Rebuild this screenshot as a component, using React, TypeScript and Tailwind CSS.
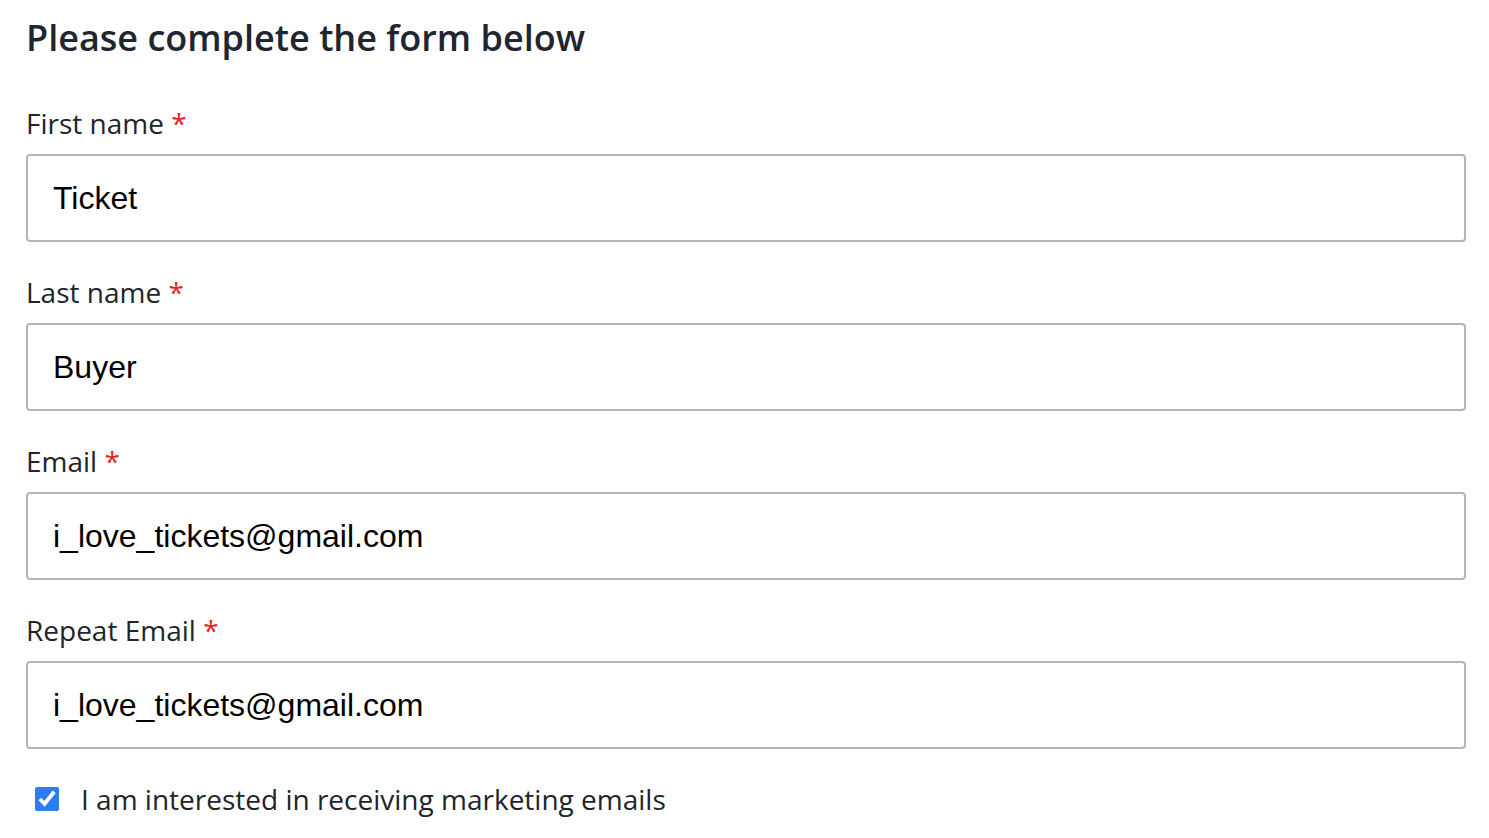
import React, { useState } from 'react';

const fields = [
  { id: 'first', label: 'First name', value: 'Ticket' },
  { id: 'last', label: 'Last name', value: 'Buyer' },
  { id: 'email', label: 'Email', value: 'i_love_tickets@gmail.com' },
  { id: 'repeat', label: 'Repeat Email', value: 'i_love_tickets@gmail.com' },
];

const App: React.FC = () => {
  const [values, setValues] = useState<Record<string, string>>(
    Object.fromEntries(fields.map(f => [f.id, f.value]))
  );
  const [marketing, setMarketing] = useState(true);

  return (
    <div className="min-h-screen bg-white px-[26px] pt-[14px] font-['Open_Sans',sans-serif] text-[#212529]">
      <h2 className="text-[36px] font-semibold leading-[48px] text-[#1f2630]">Please complete the form below</h2>

      <form className="mt-[42px] flex flex-col gap-[31px] w-[1440px]">
        {fields.map(f => (
          <div key={f.id} className="flex flex-col">
            <label htmlFor={f.id} className="text-[28px] leading-[38px] mb-[12px]">
              {f.label} <span className="text-[#e3261f]">*</span>
            </label>
            <input
              id={f.id}
              type="text"
              value={values[f.id]}
              onChange={e => setValues({ ...values, [f.id]: e.target.value })}
              className="h-[88px] w-full rounded-[4px] border-2 border-[#b5b5b5] px-[25px] font-['Liberation_Sans',Arial,sans-serif] text-[32px] text-black outline-none"
            />
          </div>
        ))}

        <label className="flex items-center gap-[22px] pl-[9px] text-[28px] leading-[38px]">
          <input
            type="checkbox"
            checked={marketing}
            onChange={e => setMarketing(e.target.checked)}
            className="h-[24px] w-[24px] accent-[#2f7bf5]"
          />
          I am interested in receiving marketing emails
        </label>
      </form>
    </div>
  );
};

export default App;
